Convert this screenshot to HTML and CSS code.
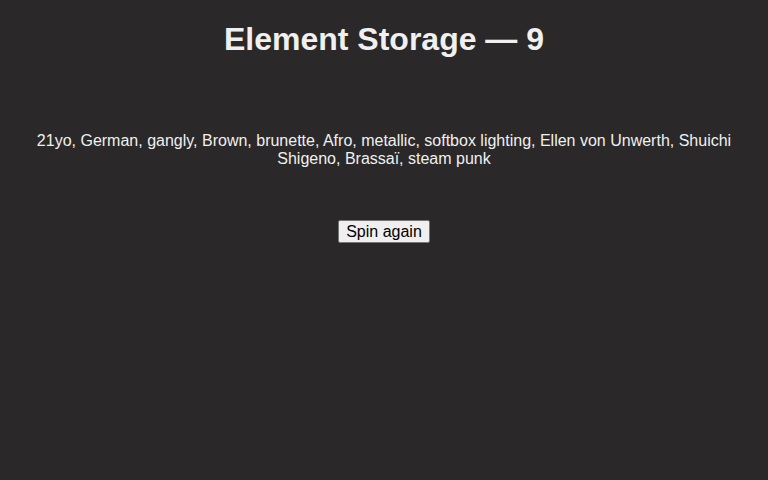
FILE: index.html
```html
<!DOCTYPE html>
<html lang="en">
<head>
<meta charset="utf-8">
<title>Element Storage</title>
<link rel="stylesheet" href="styles.css">
</head>
<body>
<main class="page">
  <h1 class="title">Element Storage — 9</h1>
  <section class="result">
    <p class="tags">21yo, German, gangly, Brown, brunette, Afro, metallic, softbox lighting, Ellen von Unwerth, Shuichi Shigeno, Brassaï, steam punk</p>
  </section>
  <div class="actions">
    <button class="spin" type="button">Spin again</button>
  </div>
</main>
</body>
</html>
```

FILE: styles.css
```css
html, body {
  background: #2a2828;
}

body {
  margin: 0;
  padding: 0 8px;
  color: #f0f0f0;
  font-family: "Liberation Sans", Arial, sans-serif;
  font-size: 16px;
  text-align: center;
}

.title {
  font-size: 32px;
  font-weight: bold;
  margin: 21px 0;
}

.result {
  padding-top: 53px;
}

.tags {
  margin: 0;
  line-height: 18px;
}

.actions {
  padding-top: 52px;
}

.spin {
  font-family: "Liberation Sans", Arial, sans-serif;
  font-size: 16px;
  color: #000;
  background: #efefef;
  border: 1px solid #767676;
  border-radius: 2px;
  padding: 1px 7px;
  line-height: 19px;
}
```
